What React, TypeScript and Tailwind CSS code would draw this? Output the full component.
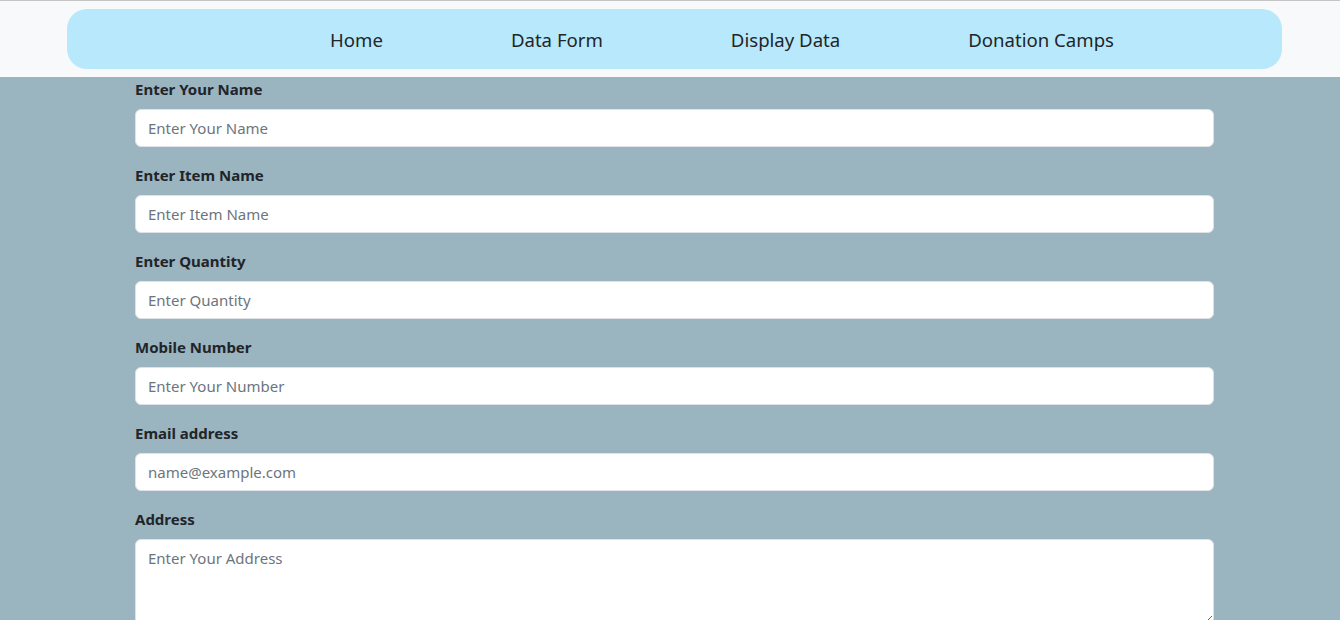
import React from 'react';

const fields = [
  { label: 'Enter Your Name', placeholder: 'Enter Your Name', type: 'text' },
  { label: 'Enter Item Name', placeholder: 'Enter Item Name', type: 'text' },
  { label: 'Enter Quantity', placeholder: 'Enter Quantity', type: 'text' },
  { label: 'Mobile Number', placeholder: 'Enter Your Number', type: 'text' },
  { label: 'Email address', placeholder: 'name@example.com', type: 'email' },
];

const links = ['Home', 'Data Form', 'Display Data', 'Donation Camps'];

export default function App() {
  return (
    <div
      className="min-h-[620px] bg-[#9ab4c0] text-[#212529]"
      style={{ fontFamily: '"Segoe UI", "Noto Sans", "Open Sans", sans-serif' }}
    >
      {/* Navbar */}
      <nav className="border-t border-[#c4c4c4] bg-[#f8f9fa] pt-2 pb-2">
        <div className="ml-[67px] flex h-[60px] w-[1215px] items-center rounded-[20px] bg-[#b8e8fb] pl-[263px] pt-[4px]">
          <ul className="flex items-center gap-[128px]">
            {links.map((link) => (
              <li key={link}>
                <a href="#" className="text-[18.6px] leading-none text-[#212529]">
                  {link}
                </a>
              </li>
            ))}
          </ul>
        </div>
      </nav>

      {/* Form */}
      <form className="ml-[135px] w-[1079px]">
        {fields.map((f) => (
          <div key={f.label} className="mb-4">
            <label className="mb-2 block text-[15px] font-bold leading-6 text-[#212529]">{f.label}</label>
            <input
              type={f.type}
              placeholder={f.placeholder}
              className="block h-[38px] w-full rounded-md border border-[#dee2e6] bg-white px-3 text-[15px] text-[#212529] placeholder:text-[#6c757d] outline-none"
            />
          </div>
        ))}
        <div className="mb-4">
          <label className="mb-2 block text-[15px] font-bold leading-6 text-[#212529]">Address</label>
          <textarea
            rows={3}
            placeholder="Enter Your Address"
            className="block h-[86px] w-full rounded-md border border-[#dee2e6] bg-white px-3 py-[6px] text-[15px] leading-6 text-[#212529] placeholder:text-[#6c757d] outline-none"
          />
        </div>
      </form>
    </div>
  );
}
